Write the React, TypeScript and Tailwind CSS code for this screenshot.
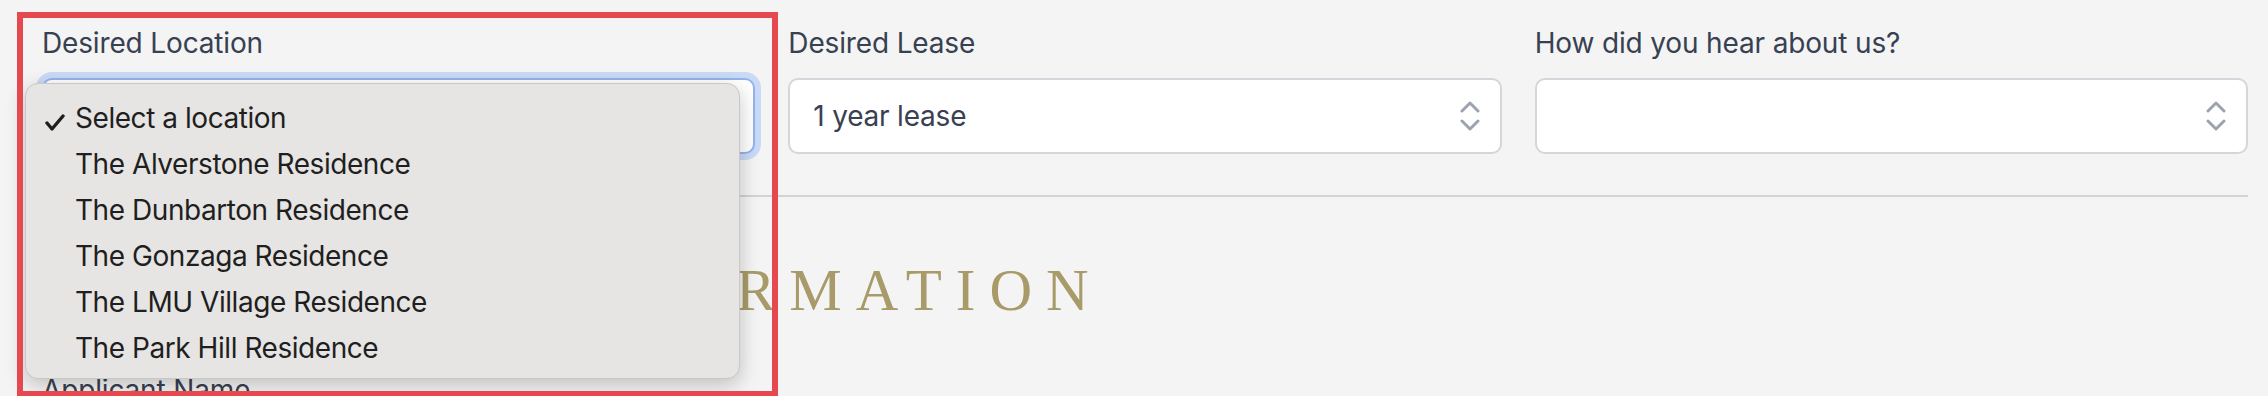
import React from "react";

const locations = [
  "Select a location",
  "The Alverstone Residence",
  "The Dunbarton Residence",
  "The Gonzaga Residence",
  "The LMU Village Residence",
  "The Park Hill Residence",
];

const Chevrons: React.FC = () => (
  <svg width="20" height="32" viewBox="0 0 20 32" fill="none" className="shrink-0">
    <polyline points="2,11 10,3 18,11" stroke="#9ca3af" strokeWidth="3" strokeLinecap="round" strokeLinejoin="round" />
    <polyline points="2,21 10,29 18,21" stroke="#9ca3af" strokeWidth="3" strokeLinecap="round" strokeLinejoin="round" />
  </svg>
);

interface FieldProps {
  label: string;
  value?: string;
  focused?: boolean;
}

const SelectField: React.FC<FieldProps> = ({ label, value, focused }) => (
  <div className="flex flex-col">
    <label className="mb-[15px] text-[28px] leading-[40px] tracking-[-0.15px] text-[#374151]">{label}</label>
    <div
      className={
        focused
          ? "flex h-[76px] items-center justify-between rounded-[10px] border-2 border-[#94b3ec] bg-white pl-[23px] pr-[20px] ring-[6px] ring-[#c8daf6]"
          : "flex h-[76px] items-center justify-between rounded-[10px] border-2 border-[#d4d6db] bg-white pl-[23px] pr-[20px]"
      }
    >
      <span className="text-[28px] tracking-[-0.2px] text-[#374151]">{value}</span>
      <Chevrons />
    </div>
  </div>
);

const App: React.FC = () => {
  return (
    <div className="relative h-[396px] w-full overflow-hidden bg-[#f4f4f4] font-['Inter','Noto_Sans',sans-serif]">
      <div className="pl-[42px] pr-[20px] pt-[23px]">
        <div className="grid grid-cols-3 gap-x-[33px]">
          <SelectField label="Desired Location" value="" focused />
          <SelectField label="Desired Lease" value="1 year lease" />
          <SelectField label="How did you hear about us?" value="" />
        </div>

        <hr className="mt-[41px] border-0 border-t-2 border-[#d3d3d3]" />

        <h2 className="mt-[64px] whitespace-nowrap pl-[22px] font-['Liberation_Serif',serif] text-[59px] leading-[59px] tracking-[14px] text-[#a89b69]">
          APPLICANT INFORMATION
        </h2>

        <label className="mt-[50px] block text-[28px] leading-[40px] tracking-[-0.15px] text-[#374151]">Applicant Name</label>
      </div>

      {/* open dropdown of the location select */}
      <div className="absolute left-[25px] top-[83px] h-[296px] w-[715px] rounded-[13px] border border-[#c9c8c6] bg-[#e6e5e3] pt-[11px] shadow-[0_6px_20px_rgba(0,0,0,0.22)]">
        {locations.map((loc, i) => (
          <div key={loc} className="relative h-[46px] pl-[49px] text-[28px] leading-[46px] tracking-[-0.45px] text-[#1f1f1f]">
            {i === 0 && (
              <svg width="20" height="18" viewBox="0 0 20 18" fill="none" className="absolute left-[19px] top-[19px]">
                <polyline points="2,9 7,15 18,2" stroke="#1f1f1f" strokeWidth="3.4" strokeLinecap="round" strokeLinejoin="round" />
              </svg>
            )}
            {loc}
          </div>
        ))}
      </div>

      {/* annotation frame */}
      <div className="pointer-events-none absolute left-[17px] top-[12px] h-[385px] w-[761px] border-[6px] border-[#e6484f]" />
    </div>
  );
};

export default App;
